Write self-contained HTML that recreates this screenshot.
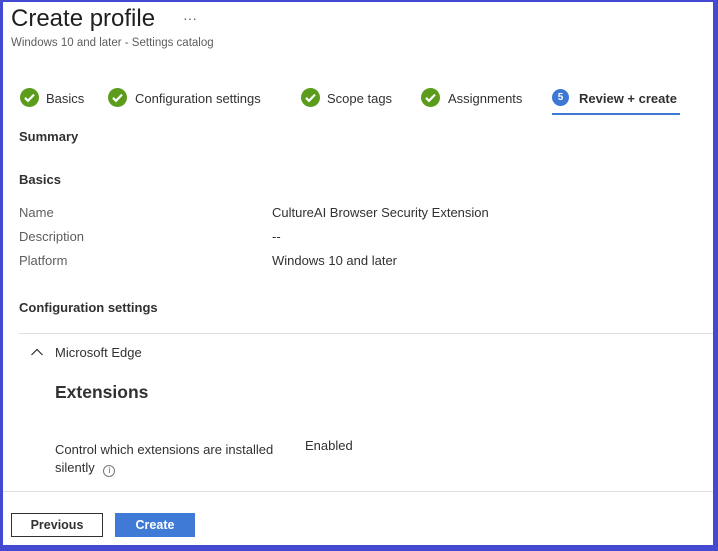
<!DOCTYPE html>
<html><head><meta charset="utf-8"><style>
*{margin:0;padding:0;box-sizing:border-box}
html,body{width:718px;height:551px;overflow:hidden;background:#4349d1}
body{position:relative;font-family:"Liberation Sans",sans-serif;color:#323130}
#p{position:absolute;left:3px;top:2px;width:710px;height:543px;background:#fff}
.a{position:absolute;white-space:nowrap}
.s{font-size:13px}
.g{color:#605e5c}
.b{font-weight:bold}
.chk{position:absolute;width:19px;height:19px;border-radius:50%;background:#5b9c1c}
.chk svg{position:absolute;left:0;top:0}
</style></head><body>
<div id="p">
<div class="a" style="left:8px;top:3px;font-size:24px;color:#201f1e">Create profile</div>
<div class="a" style="left:180px;top:8px;font-size:14px;color:#605e5c">···</div>
<div class="a g" style="left:8px;top:35px;font-size:11.5px">Windows 10 and later - Settings catalog</div>

<div class="chk" style="left:17px;top:86px"><svg width="19" height="19"><path d="M5 9.8l3 3 6-6.2" stroke="#fff" stroke-width="2.2" fill="none"/></svg></div>
<div class="a s" style="left:43px;top:89px">Basics</div>
<div class="chk" style="left:105px;top:86px"><svg width="19" height="19"><path d="M5 9.8l3 3 6-6.2" stroke="#fff" stroke-width="2.2" fill="none"/></svg></div>
<div class="a s" style="left:132px;top:89px">Configuration settings</div>
<div class="chk" style="left:298px;top:86px"><svg width="19" height="19"><path d="M5 9.8l3 3 6-6.2" stroke="#fff" stroke-width="2.2" fill="none"/></svg></div>
<div class="a s" style="left:324px;top:89px">Scope tags</div>
<div class="chk" style="left:418px;top:86px"><svg width="19" height="19"><path d="M5 9.8l3 3 6-6.2" stroke="#fff" stroke-width="2.2" fill="none"/></svg></div>
<div class="a s" style="left:445px;top:89px">Assignments</div>
<div class="a" style="left:549px;top:87px;width:17px;height:17px;border-radius:50%;background:#3c78d4;color:#fff;font-size:10px;font-weight:bold;text-align:center;line-height:17px">5</div>
<div class="a s b" style="left:576px;top:89px;font-weight:bold;color:#323130">Review + create</div>
<div class="a" style="left:549px;top:111px;width:128px;height:2px;background:#3c78d4"></div>

<div class="a s b" style="left:16px;top:127px">Summary</div>
<div class="a s b" style="left:16px;top:170px">Basics</div>
<div class="a s g" style="left:16px;top:203px">Name</div>
<div class="a s" style="left:269px;top:203px">CultureAI Browser Security Extension</div>
<div class="a s g" style="left:16px;top:227px">Description</div>
<div class="a s" style="left:269px;top:227px">--</div>
<div class="a s g" style="left:16px;top:251px">Platform</div>
<div class="a s" style="left:269px;top:251px">Windows 10 and later</div>
<div class="a s b" style="left:16px;top:298px">Configuration settings</div>
<div class="a" style="left:16px;top:331px;width:694px;height:1px;background:#e1dfdd"></div>
<svg class="a" style="left:27px;top:345px" width="14" height="10"><path d="M1.5 8l5.5-5.5 5.5 5.5" stroke="#323130" stroke-width="1.2" fill="none"/></svg>
<div class="a s" style="left:52px;top:343px">Microsoft Edge</div>
<div class="a" style="left:52px;top:380px;font-size:17.5px;font-weight:bold;color:#323130">Extensions</div>
<div class="a s" style="left:52px;top:439px;line-height:18px">Control which extensions are installed<br>silently <span style="display:inline-block;width:12px;height:12px;border:1px solid #777;border-radius:50%;font-size:8px;text-align:center;line-height:10px;color:#555;margin-left:5px;vertical-align:-1px">i</span></div>
<div class="a s" style="left:302px;top:436px">Enabled</div>
<div class="a" style="left:0;top:489px;width:710px;height:1px;background:#e1dfdd"></div>
<div class="a" style="left:8px;top:511px;width:92px;height:24px;border:1px solid #323130;font-size:12.5px;font-weight:bold;text-align:center;line-height:22px">Previous</div>
<div class="a" style="left:112px;top:511px;width:80px;height:24px;background:#3f7bd6;color:#fff;font-size:12.5px;font-weight:bold;text-align:center;line-height:24px">Create</div>
</div>
</body></html>
